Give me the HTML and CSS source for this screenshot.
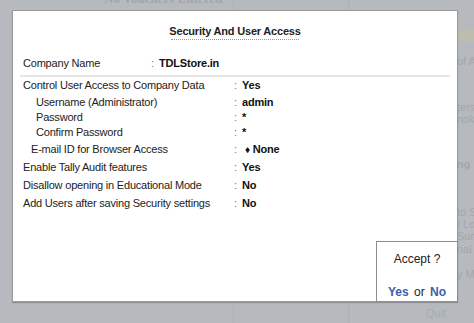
FILE: index.html
```html
<!DOCTYPE html>
<html lang="en">

<head>
  <meta charset="UTF-8">
  <meta name="viewport" content="width=device-width, initial-scale=1.0">
  <title>Security And User Access</title>
  <link rel="stylesheet" href="styles.css">
</head>

<body>
  <div class="backdrop">
    <div class="bg-top">No Vouchers Entered</div>
    <div class="bg-line bg-line-1"></div>
    <div class="bg-line bg-line-2"></div>
    <div class="bg-band"></div>
    <div class="bg-side">
      <span class="s1">of A</span>
      <span class="s2">ters</span>
      <span class="s3">nokK</span>
      <span class="s4">ng</span>
      <span class="s5">to S</span>
      <span class="s6">t Lo</span>
      <span class="s7">Sur</span>
      <span class="s8">nal</span>
      <span class="s9">y M</span>
    </div>
    <div class="bg-quit">Quit</div>
  </div>

  <div class="dialog">
    <h1 class="title">Security And User Access</h1>

    <div class="company">
      <span class="company-label">Company Name</span>
      <span class="colon">:</span>
      <span class="value">TDLStore.in</span>
    </div>

    <div class="fields">
      <div class="row">
        <span class="label">Control User Access to Company Data</span>
        <span class="colon">:</span>
        <span class="value">Yes</span>
      </div>
      <div class="row sub first-sub">
        <span class="label">Username (Administrator)</span>
        <span class="colon">:</span>
        <span class="value">admin</span>
      </div>
      <div class="row sub">
        <span class="label">Password</span>
        <span class="colon">:</span>
        <span class="value">*</span>
      </div>
      <div class="row sub">
        <span class="label">Confirm Password</span>
        <span class="colon">:</span>
        <span class="value">*</span>
      </div>
      <div class="row email">
        <span class="label">E-mail ID for Browser Access</span>
        <span class="colon">:</span>
        <span class="value"><span class="diamond">&#9830;</span> None</span>
      </div>
      <div class="row">
        <span class="label">Enable Tally Audit features</span>
        <span class="colon">:</span>
        <span class="value">Yes</span>
      </div>
      <div class="row">
        <span class="label">Disallow opening in Educational Mode</span>
        <span class="colon">:</span>
        <span class="value">No</span>
      </div>
      <div class="row">
        <span class="label">Add Users after saving Security settings</span>
        <span class="colon">:</span>
        <span class="value">No</span>
      </div>
    </div>

    <div class="accept">
      <div class="accept-q">Accept ?</div>
      <div class="accept-a"><span class="opt">Yes</span> or <span class="opt">No</span></div>
    </div>
  </div>
</body>

</html>
```

FILE: styles.css
```css
body {
  margin: 0;
  width: 474px;
  height: 323px;
  overflow: hidden;
  background-color: #b6babe;
  font-family: "Liberation Sans", Arial, sans-serif;
  font-size: 11px;
  letter-spacing: -0.2px;
  color: #222;
  position: relative;
}

.backdrop {
  position: absolute;
  inset: 0;
  color: #a3a7ab;
  letter-spacing: 0;
}

.bg-top {
  position: absolute;
  left: 104px;
  top: -9px;
  font-family: "Liberation Serif", serif;
  font-size: 13px;
  font-weight: bold;
  color: #a2a6aa;
}

.bg-line {
  position: absolute;
  top: 0;
  bottom: 0;
  width: 1px;
  background-color: #aeb2b6;
}

.bg-line-1 {
  left: 233px;
}

.bg-line-2 {
  left: 348px;
}

.bg-band {
  position: absolute;
  left: 457px;
  top: 30px;
  width: 17px;
  height: 12px;
  background-color: #bdbcae;
}

.bg-side span {
  position: absolute;
  left: 457px;
  font-size: 11px;
  line-height: 11px;
  white-space: nowrap;
}

.bg-side .s1 { top: 56px; }
.bg-side .s2 { top: 102px; }
.bg-side .s3 { top: 114px; }
.bg-side .s4 { top: 159px; font-weight: bold; }
.bg-side .s5 { top: 207px; }
.bg-side .s6 { top: 219px; }
.bg-side .s7 { top: 231px; }
.bg-side .s8 { top: 244px; }
.bg-side .s9 { top: 269px; }

.bg-quit {
  position: absolute;
  left: 426px;
  top: 307px;
  font-size: 11px;
  line-height: 12px;
  color: #a8acb0;
}

.dialog {
  position: absolute;
  left: 12px;
  top: 10px;
  width: 444px;
  height: 290px;
  background-color: #fff;
  border: 1px solid #9a9a9a;
  box-shadow: 0 1px 1px #8e9296;
}

.title {
  margin: 14px 0 0;
  text-align: center;
  font-size: 11px;
  font-weight: bold;
  color: #222;
  line-height: 13px;
}

.title::after {
  content: "";
  display: block;
  width: 128px;
  margin: 1px auto 0;
  border-bottom: 1px dotted #9a9a9a;
}

.company {
  display: flex;
  margin: 16px 7px 0 7px;
  padding: 0 0 5px 3px;
  line-height: 14px;
  border-bottom: 2px solid #e6e6e6;
}

.company-label {
  width: 128px;
}

.colon {
  width: 8px;
  color: #777;
}

.value {
  font-weight: bold;
  color: #111;
}

.fields {
  margin-top: -1px;
  padding-left: 10px;
}

.row {
  display: flex;
  height: 18px;
  line-height: 18px;
}

.row .label {
  width: 211px;
}

.row.sub {
  height: 15px;
  line-height: 15px;
}

.row.first-sub {
  height: 16px;
  line-height: 16px;
}

.row.sub .label {
  padding-left: 13px;
  width: 198px;
}

.row.email .label {
  padding-left: 8px;
  width: 203px;
}

.row.email .value {
  padding-left: 3px;
}

.diamond {
  font-size: 10px;
}

.accept {
  position: absolute;
  right: -1px;
  bottom: -1px;
  width: 80px;
  height: 59px;
  background-color: #fff;
  border: 1px solid #8e8e8e;
  text-align: center;
  font-size: 12px;
  letter-spacing: 0;
  line-height: 14px;
}

.accept-q {
  margin-top: 10px;
  color: #222;
}

.accept-a {
  margin-top: 19px;
  color: #222;
  word-spacing: 2px;
}

.opt {
  font-weight: bold;
  color: #3b62a8;
}
```
